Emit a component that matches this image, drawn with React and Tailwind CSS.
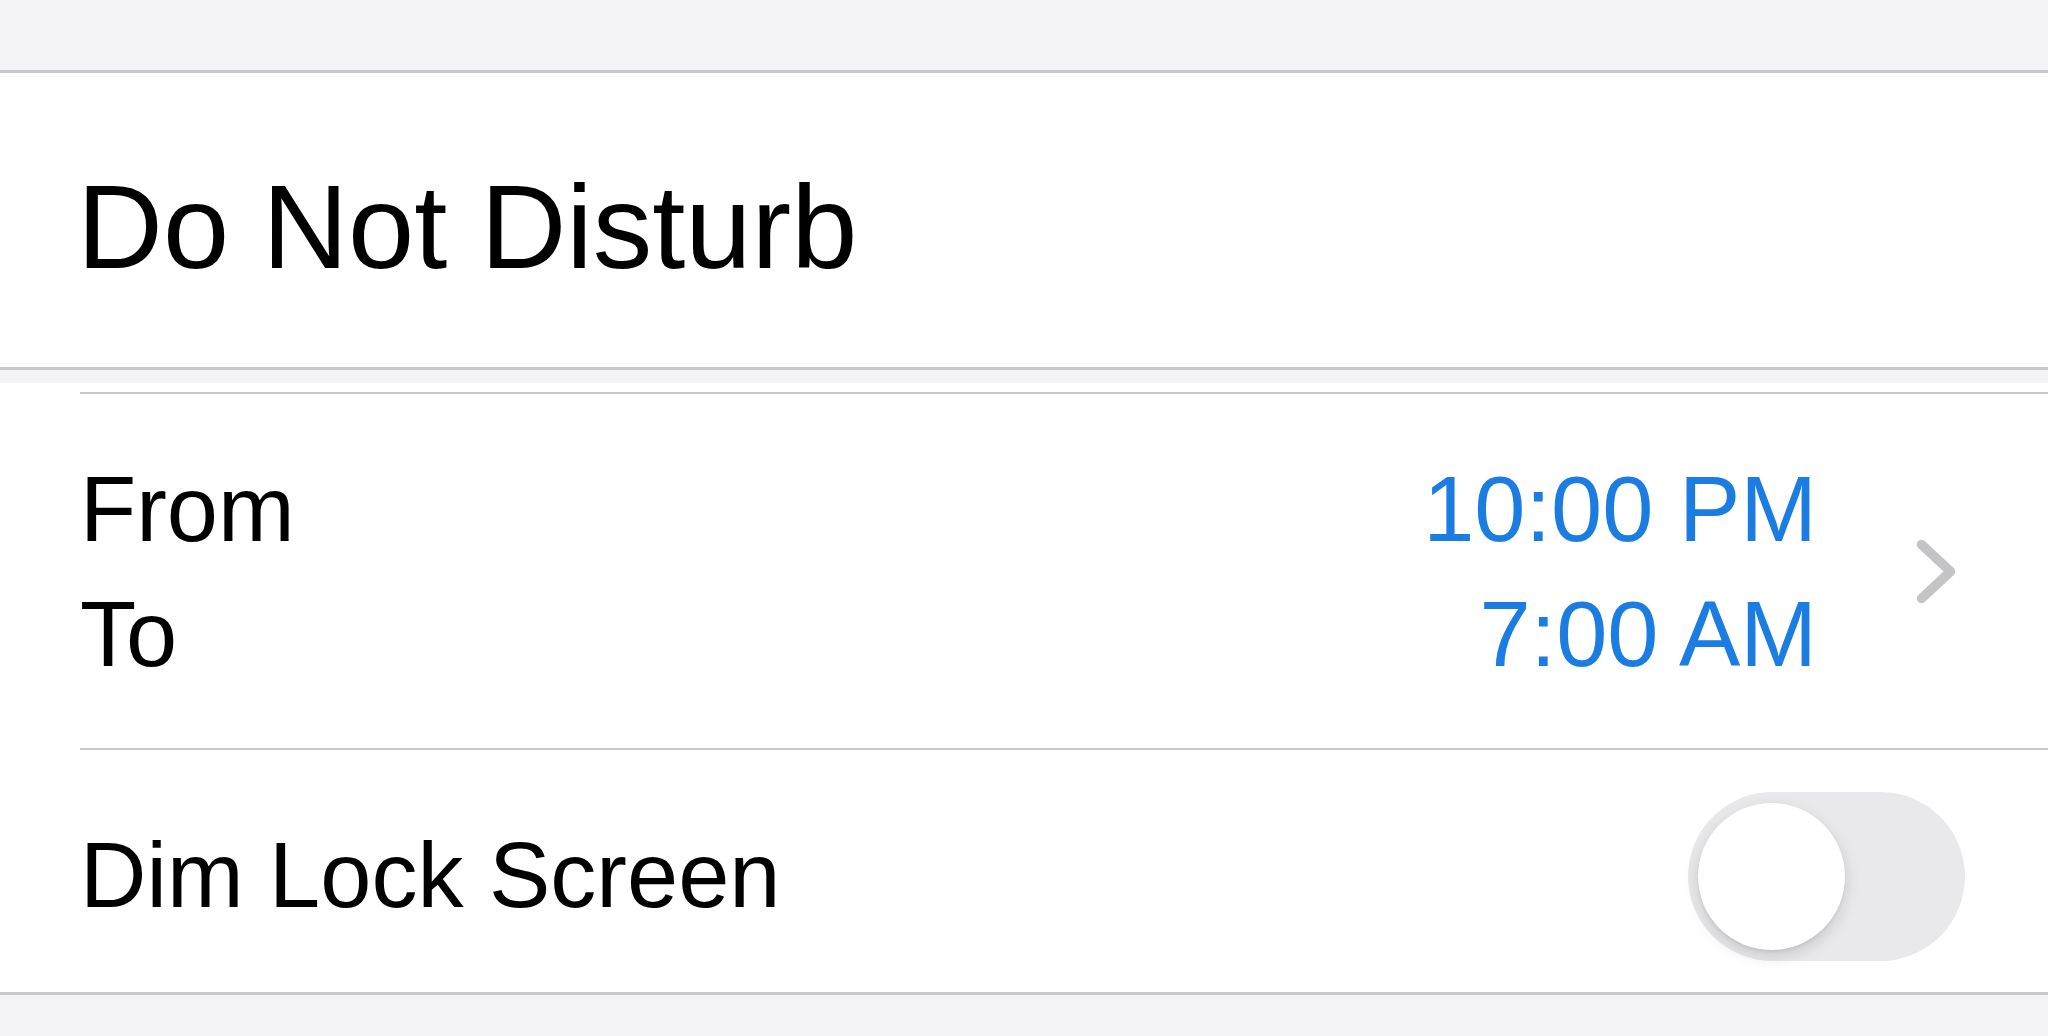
import React, { useState } from 'react';

const Chevron = () => (
  <svg width="48" height="75" viewBox="0 0 48 75" fill="none" className="shrink-0">
    <path
      d="M9.5 10.5 L38.5 37.5 L9.5 64.5"
      stroke="#c4c4c7"
      strokeWidth="9.5"
      strokeLinecap="round"
      strokeLinejoin="round"
    />
  </svg>
);

const Toggle = ({ on, onChange }) => (
  <button
    onClick={() => onChange(!on)}
    className={`relative h-[169px] w-[277px] shrink-0 rounded-full focus:outline-none ${on ? 'bg-[#34c759]' : 'bg-[#e9e9eb]'}`}
  >
    <span
      className={`absolute top-[11px] h-[147px] w-[147px] rounded-full bg-white shadow-[0_6px_16px_rgba(0,0,0,0.14),0_2px_3px_rgba(0,0,0,0.06)] ${on ? 'left-[120px]' : 'left-[10px]'}`}
    />
  </button>
);

export default function App() {
  const [dim, setDim] = useState(false);

  return (
    <div
      className="flex h-[1036px] w-full flex-col overflow-hidden bg-[#f2f2f7] text-black"
      style={{ fontFamily: '"Liberation Sans", Arial, sans-serif' }}
    >
      {/* top spacer */}
      <div className="h-[70px] shrink-0" />

      {/* title */}
      <div className="h-[300px] shrink-0 border-y-[3px] border-[#c8c7cc] bg-white pl-[77px] pt-[94px]">
        <div className="text-[119px] leading-[119px]">Do Not Disturb</div>
      </div>

      <div className="h-[13px] shrink-0" />

      {/* schedule group */}
      <div className="flex shrink-0 flex-col border-b-[3px] border-[#c8c7cc] bg-white pl-[80px]">
        <div className="h-[9px]" />
        <div className="h-[2px] bg-[#c8c7cc]" />

        <div className="flex h-[354px] items-center pt-px">
          <div className="flex-1 text-[92px] leading-[125px]">
            <div>From</div>
            <div>To</div>
          </div>
          <div className="text-right text-[92px] leading-[125px] text-[#1b7de2]">
            <div>10:00 PM</div>
            <div>7:00 AM</div>
          </div>
          <div className="ml-[95px] mr-[88px] flex items-center">
            <Chevron />
          </div>
        </div>

        <div className="h-[2px] bg-[#c8c7cc]" />

        <div className="flex h-[242px] items-center">
          <div className="flex-1 pt-2 text-[92px] leading-[92px]">Dim Lock Screen</div>
          <div className="mr-[83px] mt-[18px]">
            <Toggle on={dim} onChange={setDim} />
          </div>
        </div>
      </div>

      <div className="flex-1" />
    </div>
  );
}
